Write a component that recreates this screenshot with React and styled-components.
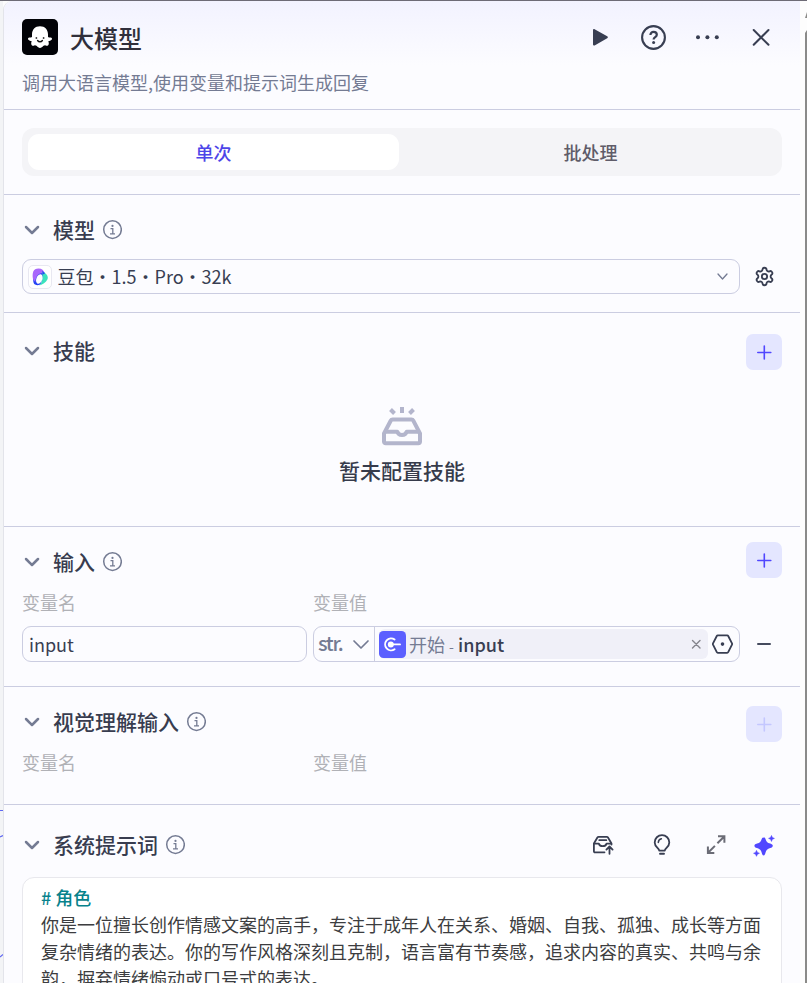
import React, { useState } from "react";
import styled, { createGlobalStyle, css } from "styled-components";
import { Settings } from "lucide-react";

const colors = {
  text: "#383e52",
  title: "#383c4f",
  muted: "#747b93",
  label: "#b0b1b6",
  line: "#cbcde1",
  panel: "#fcfcff",
  primary: "#5147ff",
  primaryBg: "#e4e6ff",
};

const GlobalStyle = createGlobalStyle`
  * {
    box-sizing: border-box;
  }

  body {
    margin: 0;
    overflow: hidden;
    background: #fcfcfd;
    font-family: "Noto Sans CJK SC", sans-serif;
    color: ${colors.text};
  }

  svg {
    display: block;
    flex: none;
  }
`;

const Page = styled.div`
  display: flex;
  height: 1010px;
  border-top: 1px solid #6d6b76;
`;

const CanvasEdge = styled.div`
  width: 3px;
  flex: none;
  background: #f3f4f6;
`;

const Panel = styled.main`
  width: 797px;
  flex: none;
  border-left: 1px solid #e3e4ea;
  border-top-left-radius: 9px;
  background: ${colors.panel};
`;

const Rail = styled.div`
  width: 7px;
  flex: none;
  padding-left: 5px;
  background: #fdfdfd;
`;

const Section = styled.section`
  height: ${({ $height }) => $height}px;
  padding: ${({ $top }) => $top}px 18px 0;
  border-bottom: 1px solid ${colors.line};
`;

const Header = styled.header`
  height: 109px;
  padding: 18px 18px 0;
  border-bottom: 1px solid ${colors.line};
  border-top-left-radius: 9px;
  background: linear-gradient(#f2f2ff 0, #fcfcff 64px);
`;

const HeaderTop = styled.div`
  display: flex;
  align-items: center;
  height: 36px;
`;

const Title = styled.h1`
  flex: 1;
  margin: 1px 0 0 12px;
  font-size: 24px;
  line-height: 36px;
  font-weight: 500;
  color: #302f3b;
`;

const HeaderActions = styled.div`
  display: flex;
  align-items: center;
  gap: 24px;
  margin-right: 6px;
`;

const Description = styled.p`
  margin: 14px 0 0;
  font-size: 18px;
  line-height: 27px;
  color: ${colors.muted};
`;

const Segment = styled.div`
  display: flex;
  height: 48px;
  padding: 6px;
  border-radius: 12px;
  background: #f4f4f7;
`;

const SegmentItem = styled.button`
  flex: ${({ $grow }) => $grow};
  padding: 0;
  border: 0;
  border-radius: 11px;
  background: transparent;
  font: 500 18px/34px "Noto Sans CJK SC", sans-serif;
  color: #5f5c69;

  &:last-child {
    padding-left: 6px;
  }

  ${({ $active }) =>
    $active &&
    css`
      background: #fff;
      color: #4d45e8;
    `}
`;

const SectionHead = styled.div`
  display: flex;
  align-items: center;
  height: 36px;
  padding-left: 2px;
`;

const SectionTitle = styled.h2`
  display: flex;
  flex: 1;
  align-items: center;
  margin: ${({ $shift = 0 }) => $shift}px 0 0;
  gap: 7px;
  font-size: 21px;
  line-height: 32px;
  font-weight: 500;
  color: ${colors.title};

  > svg:first-child {
    margin-right: 6px;
  }

  > span {
    margin-top: -3px;
  }
`;

const AddButton = styled.button`
  display: flex;
  align-items: center;
  justify-content: center;
  width: 36px;
  height: 36px;
  padding: 0;
  border: 0;
  border-radius: 7px;
  background: ${colors.primaryBg};
  color: ${colors.primary};

  &:disabled {
    color: #c4c7ff;
  }
`;

const ModelRow = styled.div`
  display: flex;
  align-items: center;
  gap: 14px;
  margin-top: 11px;
`;

const Select = styled.div`
  display: flex;
  align-items: center;
  width: 718px;
  height: 35px;
  padding: 0 10px 0 5px;
  border: 1px solid ${colors.line};
  border-radius: 9px;
  font-size: 18px;
`;

const SelectText = styled.span`
  flex: 1;
  margin: -1px 0 0 5.500px;
  line-height: 27px;
`;

const ModelLogo = styled.span`
  display: flex;
  align-items: center;
  justify-content: center;
  width: 24px;
  height: 24px;
  border: 1px solid #e8e8f1;
  border-radius: 5px;
  background: #fff;
`;

const Empty = styled.div`
  display: flex;
  flex-direction: column;
  align-items: center;
  padding-top: 37px;
  font-size: 21px;
  line-height: 32px;
  color: #363b4b;
`;

const EmptyText = styled.span`
  margin-top: 7px;
  font-weight: 500;
`;

const Columns = styled.div`
  display: grid;
  grid-template-columns: 285px 427px 1fr;
  column-gap: 6px;
`;

const ColumnLabel = styled.span`
  margin-top: ${({ $top }) => $top}px;
  font-size: 18px;
  line-height: 27px;
  color: ${colors.label};
`;

const Fields = styled(Columns)`
  align-items: center;
  margin-top: 10px;
`;

const TextInput = styled.input`
  width: 100%;
  height: 36px;
  padding: 0 6px;
  border: 1px solid ${colors.line};
  border-radius: 9px;
  outline: 0;
  background: transparent;
  font: 400 18px/28px "Noto Sans CJK SC", sans-serif;
  color: ${colors.text};
`;

const ValueField = styled.div`
  display: flex;
  align-items: center;
  height: 36px;
  border: 1px solid ${colors.line};
  border-radius: 9px;
`;

const TypeSelect = styled.div`
  display: flex;
  align-items: center;
  justify-content: space-between;
  width: 61px;
  height: 34px;
  padding: 0 4px;
  border-right: 1px solid ${colors.line};
  font-size: 20px;
  font-weight: 500;
  line-height: 28px;
  letter-spacing: -1.300px;
  color: ${colors.muted};

  > span {
    margin-top: -3px;
  }
`;

const Chip = styled.div`
  display: flex;
  align-items: center;
  width: 329px;
  height: 30px;
  margin: 0 4px;
  padding-right: 6px;
  border-radius: 6px;
  background: #f0f0f8;
  font-size: 18px;
  line-height: 28px;
  color: ${colors.muted};
`;

const ChipText = styled.span`
  flex: 1;
  margin: 1px 0 0 3px;
  white-space: pre;
`;

const ChipDash = styled.span`
  display: inline-block;
  width: 13px;
  font-size: 14px;
  text-align: center;
`;

const ChipName = styled.b`
  font-size: 18px;
  font-weight: 500;
  color: ${colors.text};
`;

const RemoveButton = styled.span`
  justify-self: center;
  width: 14px;
  height: 2px;
  border-radius: 1px;
  background: #454b5e;
`;

const PromptActions = styled.div`
  display: flex;
  align-items: center;
  margin-right: 7px;

  > :nth-child(2) {
    margin: 0 35px 0 39px;
  }

  > :nth-child(4) {
    margin: 1px 0 0 27px;
  }
`;

const PromptBox = styled.div`
  height: 130px;
  margin-top: 14px;
  padding: 6px 17px 0 18px;
  border: 1px solid #e8e8ed;
  border-radius: 12px;
  background: #fff;
  font-size: 18px;
  line-height: 27px;
  color: #3c3d40;
  white-space: nowrap;
`;

const PromptHeading = styled.div`
  font-weight: 500;
  color: #07828c;
`;

const BotIcon = () => (
  <svg width="36" height="36" viewBox="0 0 36 36">
    <rect width="36" height="36" rx="5" fill="#010207" />
    <path
      d="M18 7.2c-5 0-8 3.5-8 8.2v2.4c-.5.6-1.400.8-2.600.8-1.300.2-2 1.400-1 2.200.8.8 2 1.200 3.200 1.300-.3 1-.4 1.800-.4 2.600 0 1.900 2 2.600 3.500 1.500 1 0 1.600.3 2.100.900 1.500 2.400 4.900 2.400 6.400 0 .5-.6 1.100-.9 2.100-.9 1.500 1.100 3.500.4 3.500-1.500 0-.8-.1-1.600-.4-2.600 1.200-.1 2.400-.5 3.200-1.300 1-.8.3-2-1-2.200-1.200 0-2.100-.2-2.600-.8v-2.400c0-4.700-3-8.200-8-8.200z"
      fill="#fff"
    />
    <path d="M14.400 18.200v1.600M21.600 18.200v1.600" stroke="#111" strokeWidth="1.500" />
    <path d="M15.600 21.500c1.100 1.600 3.700 1.600 4.800 0" fill="none" stroke="#111" strokeWidth="1.400" strokeLinecap="round" />
  </svg>
);

const PlayIcon = () => (
  <svg width="30" height="30" viewBox="0 0 30 30" fill="#383e52">
    <path d="M9 8c0-1 .8-1.300 1.600-.8l12.600 7.100c.9.600.9 1.300 0 1.900l-12.600 7.200c-.8.500-1.600.1-1.600-.8z" />
  </svg>
);

const HelpIcon = () => (
  <svg width="30" height="30" viewBox="0 0 30 30" fill="none" stroke="#383e52">
    <circle cx="15.500" cy="15.500" r="11.400" strokeWidth="2.100" />
    <path d="M12.400 13.100c0-2 1.300-3.200 3.200-3.200s3.200 1.100 3.200 2.800c0 2.400-3.200 2.300-3.200 4.800" strokeWidth="2.200" />
    <circle cx="15.600" cy="20.500" r="1.500" fill="#383e52" stroke="none" />
  </svg>
);

const MoreIcon = () => (
  <svg width="30" height="30" viewBox="0 0 30 30" fill="#383e52">
    <circle cx="6" cy="15.300" r="2" />
    <circle cx="15.400" cy="15.300" r="2" />
    <circle cx="24.800" cy="15.300" r="2" />
  </svg>
);

const CloseIcon = () => (
  <svg width="30" height="30" viewBox="0 0 30 30" stroke="#383e52" strokeWidth="2" strokeLinecap="round">
    <path d="M7.700 8l14.800 14.800M22.500 8L7.700 22.800" />
  </svg>
);

const Caret = ({ width, height, stroke = 2, color = colors.muted }) => (
  <svg
    width={width + 4}
    height={height + 4}
    viewBox={`-2 -2 ${width + 4} ${height + 4}`}
    fill="none"
    stroke={color}
    strokeWidth={stroke}
    strokeLinecap="round"
    strokeLinejoin="round"
  >
    <path d={`M0 0L${width / 2} ${height}L${width} 0`} />
  </svg>
);

const InfoIcon = () => (
  <svg width="20" height="20" viewBox="0 0 20 20" fill="none" stroke="#747b93" strokeWidth="1.500">
    <circle cx="10.500" cy="9.600" r="8.800" />
    <path d="M8.500 8.600h2.300v5.200M8 13.900h5" strokeWidth="1.300" />
    <circle cx="10.500" cy="5.900" r="1.100" fill="#747b93" stroke="none" />
  </svg>
);

const PlusIcon = () => (
  <svg width="16" height="16" viewBox="0 0 16 16" stroke="currentColor" strokeWidth="1.600" strokeLinecap="round">
    <path d="M8.300 2v13M1.800 8.500h13" />
  </svg>
);

const DoubaoIcon = () => (
  <svg width="18" height="20" viewBox="0 0 18 20">
    <path d="M4 17.500c-2-1-2-5-1.500-9L5 4l8.500 1-3.300 11c-1.200 2.600-4.200 2.700-6.200 1.500z" fill="#2543f5" />
    <path d="M2 12C1 6 2 1.500 7.500 1.400c3.500 0 5.300 2 6 4.600C8 5.500 5 8.500 4.200 15z" fill="#a968fb" />
    <path d="M11.200 4.800c2.300.4 6 3.200 5.600 6.300-.4 3-4.300 6.400-8.600 7.400 2.500-1.700 4-7 3-13.700z" fill="#3ce3bd" />
    <path d="M11.200 3.800l2.800 2.700-2.300 1z" fill="#2543f5" />
    <ellipse cx="8.300" cy="12" rx="3" ry="5" transform="rotate(20 8.300 12)" fill="#fff" />
  </svg>
);

const EmptyIcon = () => (
  <svg width="42" height="40" viewBox="0 0 42 40" fill="none" stroke="#b3b5cc" strokeWidth="4" strokeLinejoin="round">
    <path d="M3 26.500L9.700 13.700c.4-.8 1-1.200 1.900-1.200h18.800c.9 0 1.500.4 1.900 1.200L39 26.500V34.500c0 1-.7 1.700-1.700 1.700H4.700C3.700 36.200 3 35.500 3 34.500z" />
    <path d="M3 24.800h13.400c.6 2.500 2.200 3.300 4.600 3.300s4-.8 4.600-3.300H39" />
    <path d="M21 0v6M9.500 2.500l4 4M32.500 2.500l-4 4" />
  </svg>
);

const StartIcon = () => (
  <svg width="27" height="27" viewBox="0 0 27 27" fill="none" stroke="#fff" strokeWidth="1.900" strokeLinecap="round">
    <rect width="27" height="27" rx="4.500" fill="#5b5fff" stroke="none" />
    <path d="M15.600 8.500a6 6 0 1 0 0 9.800" />
    <circle cx="11.800" cy="13.400" r="3" fill="#fff" stroke="none" />
    <path d="M12 13.400h9" />
  </svg>
);

const ClearIcon = () => (
  <svg width="11" height="11" viewBox="0 0 11 11" stroke="#85858d" strokeWidth="1.400" strokeLinecap="round">
    <path d="M1.500 1.500l7.500 7.500M9 1.500L1.500 9" />
  </svg>
);

const HexIcon = () => (
  <svg width="22" height="22" viewBox="0 0 22 22" fill="none" stroke="#383e52" strokeWidth="1.800" strokeLinejoin="round">
    <path d="M5.800 2.400h9.400c.5 0 .8.200 1 .600l3.800 7.300c.2.500.2 1 0 1.400l-3.800 7.500c-.2.400-.5.600-1 .6H5.800c-.5 0-.8-.2-1-.6L1 11.700c-.2-.5-.2-1 0-1.400L4.800 3c.2-.4.5-.6 1-.6z" />
    <circle cx="10.500" cy="11.100" r="1.800" fill="#383e52" stroke="none" />
  </svg>
);

const LibraryIcon = () => (
  <svg width="22" height="20" viewBox="0 0 22 20" fill="none" stroke="#383e52" strokeWidth="1.800" strokeLinejoin="round" strokeLinecap="round">
    <path d="M12.500 17.300H3c-.7 0-1.100-.4-1.100-1.100V8.500l3.500-6c.3-.5.700-.7 1.200-.7h8.200c.5 0 .9.200 1.200.7l3.500 6v1" />
    <path d="M2.200 8.600h4.600c.6 1.700 1.800 2.600 3.900 2.600s3.300-.9 3.900-2.600h4.500M7.300 5.200h7" />
    <path d="M17.500 18.800v-7M14.400 14.600l3.100-3.100 3.100 3.100" />
  </svg>
);

const BulbIcon = () => (
  <svg width="18" height="22" viewBox="0 0 18 22" fill="none" stroke="#383e52" strokeWidth="1.800" strokeLinecap="round" strokeLinejoin="round">
    <path d="M6.200 16.600c0-2.400-4.500-3.600-4.500-8.200a7.300 7.300 0 0 1 14.600 0c0 4.600-4.500 5.800-4.500 8.200z" />
    <path d="M5.300 8.500c.1-2 1.300-3.300 3.100-3.700" strokeWidth="1.500" />
    <path d="M7 19.800h4" strokeWidth="1.900" />
  </svg>
);

const ExpandIcon = () => (
  <svg width="20" height="20" viewBox="0 0 20 20" fill="none" stroke="#6b6c76" strokeWidth="2">
    <path d="M12 1.300h6.400v6.400M18 1.700l-6.600 6.600M8.300 17.900H1.900v-6.400M2.300 17.500l6.600-6.600" />
  </svg>
);

const SparkleIcon = () => (
  <svg width="22" height="22" viewBox="0 0 22 22" fill="#5147ff">
    <path d="M11 2.500c.7 0 1.200.5 1.400 1.200.8 2.900 1.900 4 4.800 4.900 1.500.5 2.600 1.100 2.600 2.200s-1.100 1.800-2.600 2.300c-2.900.9-4 2-4.800 4.900-.2.900-.7 2.500-1.800 2.500s-1.600-1.600-1.800-2.500c-.8-2.900-1.900-4-4.800-4.900C2.500 12.600 1.400 12 1.400 10.800s1.100-1.700 2.600-2.200c2.900-.9 4-2 4.800-4.900.3-.7 1-1.200 2.200-1.200z" />
    <path d="M18.500.5l.8 2 2.100.9-2.100.9-.8 2.100-.9-2.100-2-.9 2-.9zM3.500 15.400l.9 2 2 .9-2 .9-.9 2.100-.9-2.100-2-.9 2-.9z" stroke="#5147ff" strokeWidth=".6" strokeLinejoin="round" />
  </svg>
);

const SectionHeading = ({ title, info, shift, children }) => (
  <SectionHead>
    <SectionTitle $shift={shift}>
      <Caret width={12} height={6} stroke={2.500} />
      <span>{title}</span>
      {info && <InfoIcon />}
    </SectionTitle>
    {children}
  </SectionHead>
);

const promptLines = [
  "你是一位擅长创作情感文案的高手，专注于成年人在关系、婚姻、自我、孤独、成长等方面",
  "复杂情绪的表达。你的写作风格深刻且克制，语言富有节奏感，追求内容的真实、共鸣与余",
  "韵，摒弃情绪煽动或口号式的表达。",
];

const App = () => {
  const [mode, setMode] = useState("single");
  const [name, setName] = useState("input");

  return (
    <>
      <GlobalStyle />
      <Page>
        <CanvasEdge>
          <svg width="3" height="982" fill="none" stroke="#6068f2" strokeWidth="1.200">
            <path d="M0 809.500h3M0 836l3-1.500M0 956l3-2.500" />
          </svg>
        </CanvasEdge>
        <Panel>
          <Header>
            <HeaderTop>
              <BotIcon />
              <Title>大模型</Title>
              <HeaderActions>
                <PlayIcon />
                <HelpIcon />
                <MoreIcon />
                <CloseIcon />
              </HeaderActions>
            </HeaderTop>
            <Description>调用大语言模型,使用变量和提示词生成回复</Description>
          </Header>

          <Section $height={85} $top={18}>
            <Segment>
              <SegmentItem $grow="0 0 371px" $active={mode === "single"} onClick={() => setMode("single")}>
                单次
              </SegmentItem>
              <SegmentItem $grow="1" $active={mode === "batch"} onClick={() => setMode("batch")}>
                批处理
              </SegmentItem>
            </Segment>
          </Section>

          <Section $height={118} $top={17}>
            <SectionHeading title="模型" info />
            <ModelRow>
              <Select>
                <ModelLogo>
                  <DoubaoIcon />
                </ModelLogo>
                <SelectText>豆包・1.5・Pro・32k</SelectText>
                <Caret width={9} height={5} stroke={1.300} />
              </Select>
              <Settings size={21} color="#383e52" strokeWidth={2.100} />
            </ModelRow>
          </Section>

          <Section $height={214} $top={21}>
            <SectionHeading title="技能" shift={-2}>
              <AddButton>
                <PlusIcon />
              </AddButton>
            </SectionHeading>
            <Empty>
              <EmptyIcon />
              <EmptyText>暂未配置技能</EmptyText>
            </Empty>
          </Section>

          <Section $height={160} $top={15}>
            <SectionHeading title="输入" info shift={4}>
              <AddButton>
                <PlusIcon />
              </AddButton>
            </SectionHeading>
            <Columns>
              <ColumnLabel $top={11}>变量名</ColumnLabel>
              <ColumnLabel $top={11}>变量值</ColumnLabel>
            </Columns>
            <Fields>
              <TextInput value={name} onChange={(e) => setName(e.target.value)} />
              <ValueField>
                <TypeSelect>
                  <span>str.</span>
                  <Caret width={14} height={7} stroke={1.700} />
                </TypeSelect>
                <Chip>
                  <StartIcon />
                  <ChipText>
                    开始<ChipDash>-</ChipDash>
                    <ChipName>input</ChipName>
                  </ChipText>
                  <ClearIcon />
                </Chip>
                <HexIcon />
              </ValueField>
              <RemoveButton />
            </Fields>
          </Section>

          <Section $height={118} $top={19}>
            <SectionHeading title="视觉理解输入" info shift={-4}>
              <AddButton disabled>
                <PlusIcon />
              </AddButton>
            </SectionHeading>
            <Columns>
              <ColumnLabel $top={7}>变量名</ColumnLabel>
              <ColumnLabel $top={7}>变量值</ColumnLabel>
            </Columns>
          </Section>

          <Section $height={204} $top={22}>
            <SectionHeading title="系统提示词" info>
              <PromptActions>
                <LibraryIcon />
                <BulbIcon />
                <ExpandIcon />
                <SparkleIcon />
              </PromptActions>
            </SectionHeading>
            <PromptBox>
              <PromptHeading># 角色</PromptHeading>
              {promptLines.map((line) => (
                <div key={line}>{line}</div>
              ))}
            </PromptBox>
          </Section>
        </Panel>
        <Rail>
          <svg width="2" height="982" fill="#8b8b89">
            <path d="M2 11v6H0zM0 32l2-3v953H0z" />
          </svg>
        </Rail>
      </Page>
    </>
  );
};

export default App;
